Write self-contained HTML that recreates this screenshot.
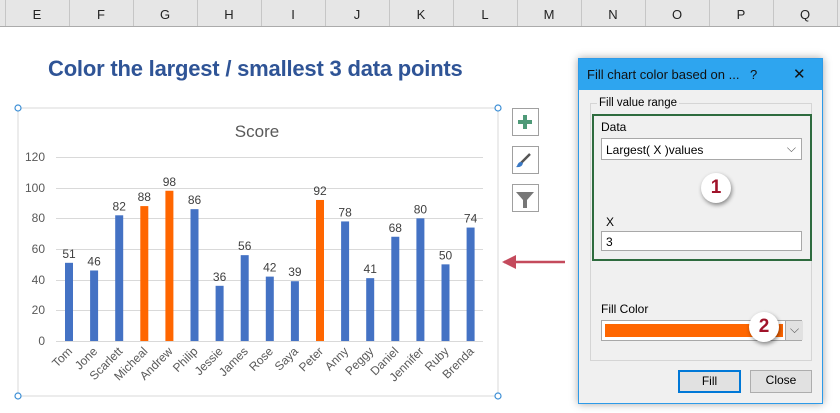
<!DOCTYPE html>
<html><head><style>
body{margin:0;width:840px;height:413px;overflow:hidden;background:#fff;font-family:"Liberation Sans",Arial,sans-serif;position:relative}
.hdr{position:absolute;left:0;top:0;width:840px;height:26px;background:#e6e6e6;border-bottom:1px solid #ababab}
.hdr span{position:absolute;top:7px;font-size:13px;color:#222;width:64px;text-align:center}
.hdr i{position:absolute;top:0;width:1px;height:26px;background:#c6c6c6}
.title{position:absolute;left:48px;top:56px;font-size:22px;font-weight:bold;color:#2f5496;letter-spacing:-0.2px}
.dlg{position:absolute;left:578px;top:58px;width:245px;height:346px;background:#f0f0f0;border:1px solid #2c9ae8;box-sizing:border-box;box-shadow:0 0 8px rgba(0,0,0,.35);font-size:12px;color:#000}
.tb{height:31px;background:#2ea5ef;color:#111;font-size:13px;line-height:31px;padding-left:8px;position:relative}
.abs{position:absolute}
.box{position:absolute;background:#fff;border:1px solid #a8a8a8;box-sizing:border-box}
.btn{position:absolute;background:#e1e1e1;border:1px solid #adadad;box-sizing:border-box;text-align:center;line-height:19px;font-size:12px}
.circ{position:absolute;width:30px;height:30px;border-radius:50%;background:#fff;box-shadow:1px 2px 4px rgba(0,0,0,.45);color:#a0132a;font-weight:bold;font-size:19px;text-align:center;line-height:30px}
</style></head><body>
<div class="hdr">
<i style="left:5px"></i>
<span style="left:5px">E</span><i style="left:69px"></i>
<span style="left:69px">F</span><i style="left:133px"></i>
<span style="left:133px">G</span><i style="left:197px"></i>
<span style="left:197px">H</span><i style="left:261px"></i>
<span style="left:261px">I</span><i style="left:325px"></i>
<span style="left:325px">J</span><i style="left:389px"></i>
<span style="left:389px">K</span><i style="left:453px"></i>
<span style="left:453px">L</span><i style="left:517px"></i>
<span style="left:517px">M</span><i style="left:581px"></i>
<span style="left:581px">N</span><i style="left:645px"></i>
<span style="left:645px">O</span><i style="left:709px"></i>
<span style="left:709px">P</span><i style="left:773px"></i>
<span style="left:773px">Q</span><i style="left:837px"></i>
</div>
<div class="title">Color the largest / smallest 3 data points</div>
<svg class="abs" style="left:0;top:0" width="840" height="413" font-family="Liberation Sans, Arial, sans-serif">
<rect x="18" y="108" width="480" height="288" fill="#fff" stroke="#d9d9d9"/>
<g fill="#fff" stroke="#3d8fd6" stroke-width="1.2">
<circle cx="18" cy="108" r="3"/><circle cx="498" cy="108" r="3"/><circle cx="18" cy="396" r="3"/><circle cx="498" cy="396" r="3"/></g>
<text x="257" y="137" font-size="17" fill="#595959" text-anchor="middle">Score</text>
<g stroke="#d9d9d9" stroke-width="1">
<line x1="56" x2="483" y1="157.5" y2="157.5"/><line x1="56" x2="483" y1="188.5" y2="188.5"/><line x1="56" x2="483" y1="218.5" y2="218.5"/><line x1="56" x2="483" y1="249.5" y2="249.5"/><line x1="56" x2="483" y1="280.5" y2="280.5"/><line x1="56" x2="483" y1="310.5" y2="310.5"/><line x1="56" x2="483" y1="341.5" y2="341.5"/></g>
<g font-size="12" fill="#595959" text-anchor="end">
<text x="45" y="161">120</text><text x="45" y="192">100</text><text x="45" y="222">80</text><text x="45" y="253">60</text><text x="45" y="284">40</text><text x="45" y="314">20</text><text x="45" y="345">0</text></g>
<g id="bars"></g>
<g stroke="#a0a0a0" fill="#fff"><rect x="512.5" y="108.5" width="26" height="27"/><rect x="512.5" y="146.5" width="26" height="27"/><rect x="512.5" y="184.5" width="26" height="27"/></g>
<path d="M525 115v14M518 122h14" stroke="#4f9a78" stroke-width="4"/>
<path d="M530 154l-9 9" stroke="#555" stroke-width="2.5"/><path d="M517 166q2-6 6-3q-1 5-7 4z" fill="#3a78c4"/>
<path d="M516 192h18l-7 8v8h-4v-8z" fill="#777"/>
<path d="M504 262h61" stroke="#c44a5c" stroke-width="2.5"/><path d="M502 262l14-7v14z" fill="#c44a5c"/>
</svg>
<div class="dlg">
<div class="tb">Fill chart color based on ...<span class="abs" style="left:171px">?</span><span class="abs" style="left:214px;font-size:15px">✕</span></div>
<div class="abs" style="left:11px;top:44px;width:222px;height:258px;border:1px solid #d5d5d5;box-sizing:border-box"></div>
<div class="abs" style="left:18px;top:38px;background:#f0f0f0;padding:0 2px;font-size:11.5px">Fill value range</div>
<div class="abs" style="left:13px;top:55px;width:220px;height:147px;border:2px solid #2e6b3e;box-sizing:border-box"></div>
<div class="abs" style="left:22px;top:61px">Data</div>
<div class="box" style="left:22px;top:79px;width:201px;height:22px;padding:4px 0 0 4px">Largest( X )values<span class="abs" style="right:5px;top:2px;color:#555">⌵</span></div>
<div class="circ" style="left:122px;top:114px">1</div>
<div class="abs" style="left:27px;top:156px">X</div>
<div class="box" style="left:22px;top:172px;width:201px;height:20px;padding:3px 0 0 4px">3</div>
<div class="abs" style="left:22px;top:243px">Fill Color</div>
<div class="box" style="left:22px;top:261px;width:201px;height:21px"><div class="abs" style="left:3px;top:3px;width:178px;height:13px;background:#ff6600"></div><div class="abs" style="left:183px;top:0;width:17px;height:19px;background:#e1e1e1;border-left:1px solid #a8a8a8;text-align:center;color:#555;line-height:17px">⌵</div></div>
<div class="circ" style="left:170px;top:253px">2</div>
<div class="btn" style="left:99px;top:311px;width:63px;height:23px;border:2px solid #0078d7">Fill</div>
<div class="btn" style="left:171px;top:311px;width:62px;height:23px">Close</div>
</div>
<script>
var v=[51,46,82,88,98,86,36,56,42,39,92,78,41,68,80,50,74],n=["Tom","Jone","Scarlett","Micheal","Andrew","Philip","Jessie","James","Rose","Saya","Peter","Anny","Peggy","Daniel","Jennifer","Ruby","Brenda"],s="";
for(var i=0;i<17;i++){var x=69+i*25.1,h=v[i]*1.533,c=(i==3||i==4||i==10)?"#ff6600":"#4472c4";
s+='<rect x="'+(x-4)+'" y="'+(341-h)+'" width="8" height="'+h+'" fill="'+c+'"/>';
s+='<text x="'+x+'" y="'+(336-h)+'" font-size="12" fill="#404040" text-anchor="middle">'+v[i]+'</text>';
s+='<text transform="translate('+(x+4)+',352) rotate(-45)" font-size="12" fill="#595959" text-anchor="end">'+n[i]+'</text>';}
document.getElementById("bars").innerHTML=s;
</script>
</body></html>
